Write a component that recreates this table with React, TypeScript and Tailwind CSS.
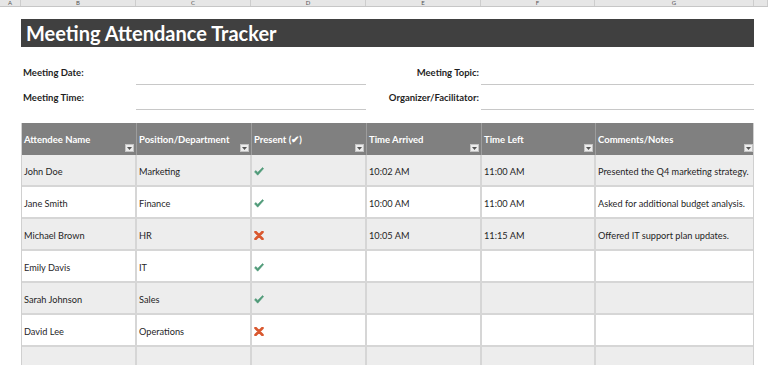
import React from 'react';

const font = { fontFamily: 'Lato, "Open Sans", "Liberation Sans", sans-serif' };

interface Attendee {
  name: string;
  dept: string;
  present: boolean | null;
  arrived: string;
  left: string;
  notes: string;
}

const attendees: Attendee[] = [
  { name: 'John Doe', dept: 'Marketing', present: true, arrived: '10:02 AM', left: '11:00 AM', notes: 'Presented the Q4 marketing strategy.' },
  { name: 'Jane Smith', dept: 'Finance', present: true, arrived: '10:00 AM', left: '11:00 AM', notes: 'Asked for additional budget analysis.' },
  { name: 'Michael Brown', dept: 'HR', present: false, arrived: '10:05 AM', left: '11:15 AM', notes: 'Offered IT support plan updates.' },
  { name: 'Emily Davis', dept: 'IT', present: true, arrived: '', left: '', notes: '' },
  { name: 'Sarah Johnson', dept: 'Sales', present: true, arrived: '', left: '', notes: '' },
  { name: 'David Lee', dept: 'Operations', present: false, arrived: '', left: '', notes: '' },
  { name: '', dept: '', present: null, arrived: '', left: '', notes: '' },
];

const headers = ['Attendee Name', 'Position/Department', 'Present (✔)', 'Time Arrived', 'Time Left', 'Comments/Notes'];
const colWidths = ['w-[115px]', 'w-[115px]', 'w-[115px]', 'w-[115px]', 'w-[114px]', 'w-[159px]'];

function Check() {
  return (
    <svg width="10" height="9" viewBox="0 0 10 9">
      <path d="M0.5 4.8 L2 3.6 L3.7 5.4 L8.6 0.6 L9.6 1.6 L3.7 8.2 Z" fill="#4f9a78" stroke="#4f9a78" strokeWidth="0.6" strokeLinejoin="round" />
    </svg>
  );
}

function Cross() {
  return (
    <svg width="10" height="9" viewBox="0 0 10 9">
      <path d="M1.5 1 L8.5 8 M8.5 1 L1.5 8" fill="none" stroke="#d9582f" strokeWidth="2.6" strokeLinecap="round" />
    </svg>
  );
}

function FilterButton() {
  return (
    <div className="absolute right-[2px] bottom-[3px] w-[9px] h-[8px] bg-[#ececec] border border-[#c4c4c4] flex items-center justify-center">
      <svg width="5" height="3" viewBox="0 0 5 3">
        <path d="M0 0 L5 0 L2.5 3 Z" fill="#555" />
      </svg>
    </div>
  );
}

export default function App() {
  const letters = [
    { l: 'A', w: 'w-[21px]' },
    { l: 'B', w: 'w-[115px]' },
    { l: 'C', w: 'w-[115px]' },
    { l: 'D', w: 'w-[115px]' },
    { l: 'E', w: 'w-[115px]' },
    { l: 'F', w: 'w-[114px]' },
    { l: 'G', w: 'w-[159px]' },
    { l: '', w: 'flex-1' },
  ];

  return (
    <div className="w-[768px] h-[365px] bg-white overflow-hidden text-[#1f1f1f]" style={font}>
      {/* Column letter strip */}
      <div className="flex h-[7px] bg-[#e6e6e6] border-b border-[#c6c6c6]">
        {letters.map((c, i) => (
          <div key={i} className={`${c.w} shrink-0 border-r border-[#cdcdcd] flex items-end justify-center`}>
            <span className="text-[6px] leading-[6px] text-[#555]">{c.l}</span>
          </div>
        ))}
      </div>

      <div className="pl-[21px]">
        {/* Title */}
        <div className="mt-[12px] w-[733px] h-[28px] bg-[#404040] flex items-center px-[5px]">
          <h1 className="text-white font-bold text-[20px] leading-none">Meeting Attendance Tracker</h1>
        </div>

        {/* Meeting info */}
        <div className="mt-[13px] flex flex-col">
          {[
            ['Meeting Date:', 'Meeting Topic:'],
            ['Meeting Time:', 'Organizer/Facilitator:'],
          ].map(([l, r]) => (
            <div key={l} className="flex h-[25px]">
              <div className="w-[115px] flex items-center pt-[2px] pl-[2px] text-[9.5px] font-bold">{l}</div>
              <div className="w-[230px] border-b border-[#c8c8c8]" />
              <div className="w-[115px] flex items-center justify-end pt-[2px] pr-[2px] text-[9.5px] font-bold">{r}</div>
              <div className="w-[273px] border-b border-[#c8c8c8]" />
            </div>
          ))}
        </div>

        {/* Table */}
        <div className="mt-[13px] w-[733px] border-l border-r border-[#d0d0d0]">
          <div className="flex h-[32px] bg-[#808080]">
            {headers.map((h, i) => (
              <div key={h} className={`${colWidths[i]} shrink-0 relative flex items-center pt-[3px] pl-[2px] text-white font-bold text-[9.5px] ${i < 5 ? 'border-r border-[#9d9d9d]' : ''}`}>
                {h}
                <FilterButton />
              </div>
            ))}
          </div>
          {attendees.map((a, r) => (
            <div key={r} className={`flex h-[32px] border-b-2 border-[#d6d6d6] ${r % 2 === 0 ? 'bg-[#ededed]' : 'bg-white'}`}>
              {[a.name, a.dept, null, a.arrived, a.left, a.notes].map((v, i) => (
                <div key={i} className={`${colWidths[i]} shrink-0 flex items-center pt-[3px] pl-[2px] text-[9.2px] ${i < 5 ? 'border-r-2 border-[#d6d6d6]' : ''}`}>
                  {i === 2 ? (a.present === true ? <Check /> : a.present === false ? <Cross /> : null) : v}
                </div>
              ))}
            </div>
          ))}
        </div>
      </div>
    </div>
  );
}
